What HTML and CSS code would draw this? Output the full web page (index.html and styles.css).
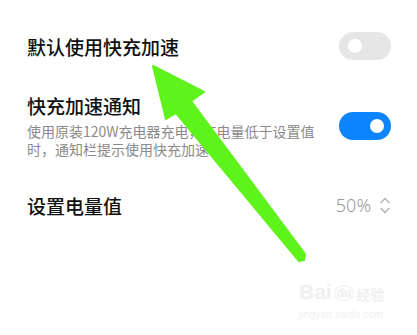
FILE: index.html
```html
<!DOCTYPE html>
<html lang="zh">
<head>
<meta charset="utf-8">
<link rel="stylesheet" href="styles.css">
</head>
<body>
<div class="page">
  <div class="row row-single">
    <div class="title">默认使用快充加速</div>
    <div class="switch off"><span class="knob"></span></div>
  </div>
  <div class="row row-double">
    <div class="text">
      <div class="title">快充加速通知</div>
      <div class="desc">使用原装120W充电器充电，在电量低于设置值时，通知栏提示使用快充加速</div>
    </div>
    <div class="switch on"><span class="knob"></span></div>
  </div>
  <div class="row row-single">
    <div class="title">设置电量值</div>
    <div class="value">
      <span class="pct">50%</span>
      <svg class="updown" width="12" height="17" viewBox="0 0 12 17">
        <polyline points="1.5,6 6,1.5 10.5,6" fill="none" stroke="#b0b0b0" stroke-width="1.3"/>
        <polyline points="1.5,11 6,15.5 10.5,11" fill="none" stroke="#b0b0b0" stroke-width="1.3"/>
      </svg>
    </div>
  </div>

  <svg class="arrow" width="417" height="335" viewBox="0 0 417 335">
    <polygon fill="#5ef31a" stroke="#5ef31a" stroke-width="2" stroke-linejoin="round"
      points="153,66 204,92 191,101 305,254 304,260 299,261 176,113 166,119"/>
  </svg>

  <div class="watermark">
    <div class="wm-top"><span class="wm-bai">Bai</span><span class="wm-du">du</span><span class="wm-jy">经验</span></div>
    <div class="wm-url">jingyan.baidu.com</div>
  </div>
</div>
</body>
</html>
```

FILE: styles.css
```css
html, body {
  margin: 0;
  padding: 0;
  background: #ffffff;
}
.page {
  position: relative;
  width: 417px;
  height: 335px;
  overflow: hidden;
  padding-top: 18px;
  box-sizing: border-box;
  font-family: "Noto Sans CJK SC", "Noto Sans", sans-serif;
}
.row {
  display: flex;
  align-items: center;
  justify-content: space-between;
  padding: 0 26px 0 27px;
}
.row-single {
  height: 56px;
}
.row-double {
  padding-top: 19px;
  padding-bottom: 19px;
}
.title {
  font-size: 19px;
  line-height: 25px;
  font-weight: 500;
  color: #111111;
}
.text {
  display: flex;
  flex-direction: column;
  gap: 4px;
  max-width: 296px;
}
.desc {
  font-size: 14px;
  line-height: 18px;
  color: #8a8a8a;
}
.switch {
  width: 52px;
  height: 28px;
  border-radius: 14px;
  display: flex;
  align-items: center;
  box-sizing: border-box;
  flex-shrink: 0;
}
.switch.off {
  background: #e6e6e6;
  justify-content: flex-start;
  padding-left: 9px;
}
.switch.on {
  background: #0c84fb;
  justify-content: flex-end;
  padding-right: 7px;
}
.knob {
  width: 14px;
  height: 14px;
  border-radius: 50%;
  background: #ffffff;
}
.value {
  display: flex;
  align-items: center;
  gap: 8px;
}
.pct {
  font-family: "Noto Sans", sans-serif;
  font-weight: 300;
  font-size: 18px;
  color: #9a9a9a;
}
.updown {
  display: block;
}
.arrow {
  position: absolute;
  left: 0;
  top: 0;
}
.watermark {
  position: absolute;
  left: 299px;
  top: 280px;
  width: 92px;
  color: #f0f0f0;
  font-family: "Liberation Sans", sans-serif;
}
.wm-top {
  display: flex;
  align-items: flex-end;
  gap: 2px;
  font-size: 21px;
  line-height: 24px;
  font-weight: bold;
}
.wm-du {
  font-size: 12px;
  line-height: 14px;
  border: 1.5px solid #f0f0f0;
  border-radius: 50%;
  padding: 0 2px;
  margin-bottom: 3px;
}
.wm-jy {
  font-family: "Noto Sans CJK SC", sans-serif;
  font-size: 14px;
  line-height: 20px;
}
.wm-url {
  font-size: 10px;
  line-height: 14px;
  margin-top: 4px;
  letter-spacing: 0.2px;
}
```
